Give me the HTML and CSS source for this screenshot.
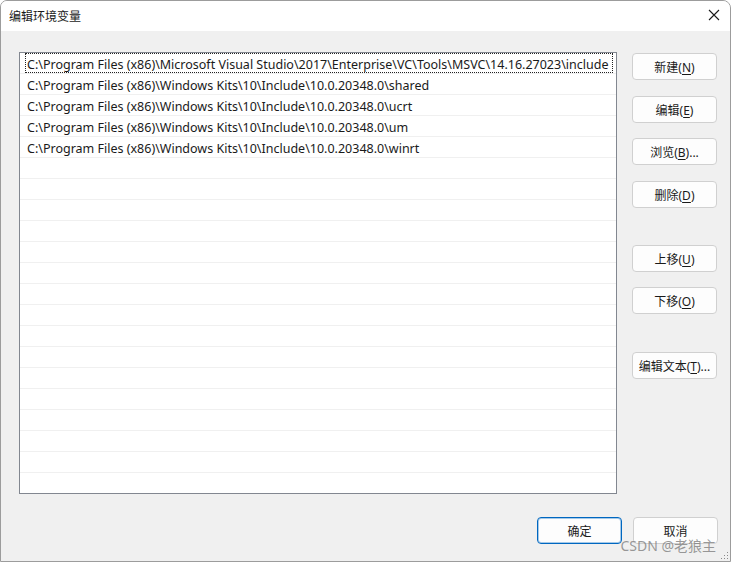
FILE: index.html
```
<!DOCTYPE html>
<html>
<head>
    <meta charset="utf-8">
    <title>编辑环境变量</title>
    <link rel="stylesheet" href="styles.css">
</head>
<body>
    <div class="window">
        <div class="titlebar">
            <span class="title">编辑环境变量</span>
            <svg class="close" width="12" height="12" viewBox="0 0 12 12">
                <path d="M1 1L11 11M11 1L1 11" stroke="#1a1a1a" stroke-width="1.1" fill="none"/>
            </svg>
        </div>
        <div class="body">
            <div class="main">
                <div class="list">
                    <div class="row"><div class="cell focus">C:\Program Files (x86)\Microsoft Visual Studio\2017\Enterprise\VC\Tools\MSVC\14.16.27023\include</div></div>
                    <div class="row"><div class="cell">C:\Program Files (x86)\Windows Kits\10\Include\10.0.20348.0\shared</div></div>
                    <div class="row"><div class="cell">C:\Program Files (x86)\Windows Kits\10\Include\10.0.20348.0\ucrt</div></div>
                    <div class="row"><div class="cell">C:\Program Files (x86)\Windows Kits\10\Include\10.0.20348.0\um</div></div>
                    <div class="row"><div class="cell">C:\Program Files (x86)\Windows Kits\10\Include\10.0.20348.0\winrt</div></div>
                    <div class="row"></div>
                    <div class="row"></div>
                    <div class="row"></div>
                    <div class="row"></div>
                    <div class="row"></div>
                    <div class="row"></div>
                    <div class="row"></div>
                    <div class="row"></div>
                    <div class="row"></div>
                    <div class="row"></div>
                    <div class="row"></div>
                    <div class="row"></div>
                    <div class="row"></div>
                    <div class="row"></div>
                    <div class="row"></div>
                    <div class="row"></div>
                    <div class="row"></div>
                </div>
                <div class="side">
                    <button class="btn">新建(<u>N</u>)</button>
                    <button class="btn gap16">编辑(<u>E</u>)</button>
                    <button class="btn gap15">浏览(<u>B</u>)...</button>
                    <button class="btn gap16">删除(<u>D</u>)</button>
                    <button class="btn gap37">上移(<u>U</u>)</button>
                    <button class="btn gap15">下移(<u>O</u>)</button>
                    <button class="btn gap38">编辑文本(<u>T</u>)...</button>
                </div>
            </div>
            <div class="footer">
                <button class="btn default">确定</button>
                <button class="btn">取消</button>
            </div>
        </div>
        <span class="watermark">CSDN @老狼主</span>
        <svg class="grip" width="10" height="10" viewBox="0 0 10 10">
            <rect x="8" y="2" width="1" height="1" fill="#8a8a8a"/>
            <rect x="5" y="5" width="1" height="1" fill="#8a8a8a"/>
            <rect x="8" y="5" width="1" height="1" fill="#8a8a8a"/>
            <rect x="2" y="8" width="1" height="1" fill="#8a8a8a"/>
            <rect x="5" y="8" width="1" height="1" fill="#8a8a8a"/>
            <rect x="8" y="8" width="1" height="1" fill="#8a8a8a"/>
        </svg>
    </div>
</body>
</html>
```

FILE: styles.css
```
html, body{
    margin: 0;
    padding: 0;
    background-color: #fff;
}
body{
    font-family: "Noto Sans", "Noto Sans CJK SC", sans-serif;
    font-size: 12px;
    color: #1a1a1a;
}
.window{
    position: relative;
    width: 729px;
    height: 560px;
    border: solid 1px #9c9c9c;
    border-radius: 7px 8px 0 0;
    background-color: #f0f0f0;
    overflow: hidden;
}
.titlebar{
    display: flex;
    align-items: center;
    justify-content: space-between;
    height: 30px;
    padding: 0 10px 0 8px;
    background-color: #fff;
}
.title{
    font-family: "Noto Sans CJK SC", sans-serif;
    font-size: 12px;
    margin-top: -1px;
}
.close{
    margin-top: -2px;
}
.body{
    padding: 21px 12px 0 18px;
}
.main{
    display: flex;
}
.list{
    width: 596px;
    height: 440px;
    border: solid 1px #828790;
    background-color: #fff;
    overflow: hidden;
}
.row{
    height: 20px;
    border-bottom: solid 1px #f0f0f0;
    padding: 0 3px 0 5px;
}
.cell{
    height: 15px;
    padding: 3px 0 0 1px;
    line-height: 15px;
    font-size: 12.5px;
    border: dotted 1px transparent;
    white-space: nowrap;
    overflow: hidden;
}
.cell.focus{
    border-color: #222;
}
.side{
    display: flex;
    flex-direction: column;
    margin-left: 15px;
    padding-top: 1px;
}
.btn{
    width: 85px;
    height: 27px;
    padding: 0;
    border: solid 1px #d0d0d0;
    border-radius: 4px;
    background-color: #fdfdfd;
    font-family: "Noto Sans", "Noto Sans CJK SC", sans-serif;
    font-size: 12px;
    color: #1a1a1a;
}
.btn u{
    text-underline-offset: 2px;
}
.gap15{ margin-top: 15px; }
.gap16{ margin-top: 16px; }
.gap37{ margin-top: 37px; }
.gap38{ margin-top: 38px; }
.footer{
    display: flex;
    justify-content: flex-end;
    gap: 11px;
    margin-top: 23px;
}
.btn.default{
    border-color: #0067c0;
    box-shadow: inset 0 0 0 1px rgba(0, 103, 192, 0.35);
}
.watermark{
    position: absolute;
    right: 14px;
    bottom: 6px;
    font-family: "Noto Sans", "Noto Sans CJK SC", sans-serif;
    font-size: 14px;
    color: rgba(120, 120, 120, 0.75);
}
.grip{
    position: absolute;
    right: 1px;
    bottom: 1px;
}
```
